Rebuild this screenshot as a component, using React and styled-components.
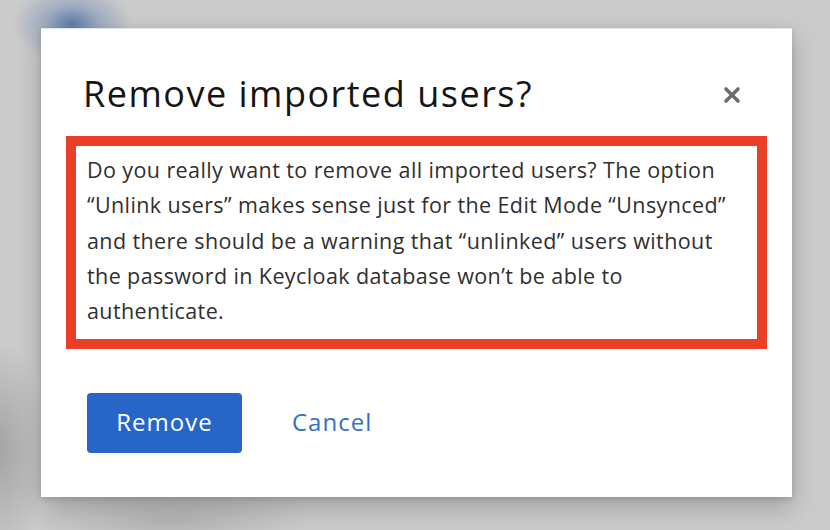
import React from "react";
import styled, { createGlobalStyle } from "styled-components";

const GlobalStyle = createGlobalStyle`
  html, body {
    margin: 0;
    padding: 0;
  }
  body {
    width: 830px;
    height: 530px;
    overflow: hidden;
    font-family: "Open Sans", "Noto Sans", sans-serif;
  }
`;

const Backdrop = styled.div`
  width: 830px;
  height: 530px;
  box-sizing: border-box;
  padding: 28px 0 0 41px;
  background:
    radial-gradient(ellipse 60px 40px at 72px 24px, rgba(75, 110, 168, 0.85) 0, rgba(105, 135, 178, 0.45) 45%, rgba(203, 203, 203, 0) 100%),
    radial-gradient(ellipse 50px 110px at 0px 450px, rgba(150, 150, 150, 0.75), rgba(203, 203, 203, 0) 100%),
    radial-gradient(ellipse 140px 40px at 170px 520px, rgba(170, 170, 170, 0.7), rgba(203, 203, 203, 0) 100%),
    #cbcbcb;
`;

const Modal = styled.div`
  width: 751px;
  height: 469px;
  box-sizing: border-box;
  background: #fff;
  border-top: 1px solid #dfe6ee;
  box-shadow: 0 10px 24px rgba(0, 0, 0, 0.22), 0 2px 6px rgba(0, 0, 0, 0.12);
  display: flex;
  flex-direction: column;
  padding: 43px 0 0 0;
`;

const Header = styled.div`
  display: flex;
  align-items: center;
  justify-content: space-between;
  padding: 0 51px 0 42px;
`;

const Title = styled.h1`
  margin: 0;
  font-family: "Open Sans", "Noto Sans", sans-serif;
  font-size: 36px;
  font-weight: 400;
  line-height: 44px;
  color: #151515;
  letter-spacing: 1.5px;
`;

const CloseButton = styled.button`
  border: none;
  background: none;
  padding: 0;
  width: 18px;
  height: 18px;
  display: flex;
  align-items: center;
  justify-content: center;
  cursor: pointer;
  margin-top: 2px;
`;

const Highlight = styled.div`
  margin: 20px 0 0 25px;
  width: 701px;
  height: 213px;
  box-sizing: border-box;
  border: 10px solid #ea3f27;
  padding: 6px 8px 0 11px;
`;

const BodyText = styled.p`
  margin: 0;
  font-family: "Open Sans", "Noto Sans", sans-serif;
  font-size: 21.5px;
  letter-spacing: 0.4px;
  line-height: 35.3px;
  color: #2f2f2f;
`;

const Footer = styled.div`
  display: flex;
  align-items: center;
  gap: 50px;
  margin: 44px 0 0 46px;
`;

const Button = styled.button`
  font-family: "Open Sans", "Noto Sans", sans-serif;
  font-size: 24px;
  letter-spacing: 1px;
  height: 60px;
  padding: 0 0 3px 0;
  border-radius: 4px;
  cursor: pointer;
  border: none;
  width: ${(p) => (p.$variant === "primary" ? "155px" : "auto")};
  background: ${(p) => (p.$variant === "primary" ? "#2766c6" : "transparent")};
  color: ${(p) => (p.$variant === "primary" ? "#ffffff" : "#2f71cc")};
`;

const CloseIcon = () => (
  <svg width="18" height="18" viewBox="0 0 18 18">
    <path
      d="M3 3 L15 15 M15 3 L3 15"
      stroke="#6a6e73"
      strokeWidth="3.6"
      strokeLinecap="round"
    />
  </svg>
);

export default function App() {
  return (
    <>
      <GlobalStyle />
      <Backdrop>
        <Modal>
          <Header>
            <Title>Remove imported users?</Title>
            <CloseButton aria-label="Close">
              <CloseIcon />
            </CloseButton>
          </Header>
          <Highlight>
            <BodyText>
              Do you really want to remove all imported users? The option
              “Unlink users” makes sense just for the Edit Mode “Unsynced” and
              there should be a warning that “unlinked” users without the
              password in Keycloak database won’t be able to authenticate.
            </BodyText>
          </Highlight>
          <Footer>
            <Button $variant="primary">Remove</Button>
            <Button $variant="link">Cancel</Button>
          </Footer>
        </Modal>
      </Backdrop>
    </>
  );
}
